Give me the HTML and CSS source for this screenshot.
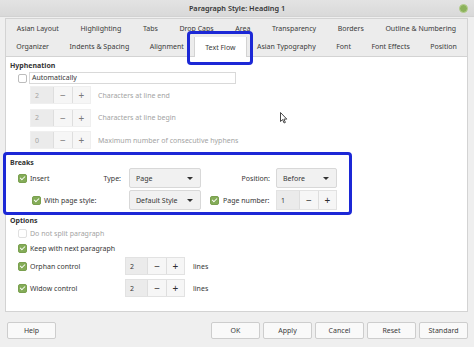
FILE: index.html
```html
<!DOCTYPE html>
<html lang="en">

<head>
    <meta charset="UTF-8">
    <title>Paragraph Style: Heading 1</title>
    <link rel="stylesheet" href="styles.css">
</head>

<body>
    <div class="titlebar">
        <span></span>
        <span class="title">Paragraph Style: Heading 1</span>
        <i class="close"></i>
    </div>

    <div class="dialog">
        <div class="notebook">
            <div class="tabrow">
                <div class="tab">Asian Layout</div>
                <div class="tab">Highlighting</div>
                <div class="tab">Tabs</div>
                <div class="tab">Drop Caps</div>
                <div class="tab">Area</div>
                <div class="tab">Transparency</div>
                <div class="tab">Borders</div>
                <div class="tab">Outline &amp; Numbering</div>
            </div>
            <div class="tabrow second">
                <div class="tab">Organizer</div>
                <div class="tab">Indents &amp; Spacing</div>
                <div class="tab">Alignment</div>
                <div class="tab active">Text Flow</div>
                <div class="tab">Asian Typography</div>
                <div class="tab">Font</div>
                <div class="tab">Font Effects</div>
                <div class="tab">Position</div>
            </div>

            <div class="page">
                <!-- Hyphenation -->
                <div class="heading">Hyphenation</div>
                <div class="check-row">
                    <span class="cb"></span>
                    <span class="focus">Automatically</span>
                </div>
                <div class="spin-row first">
                    <div class="spin off"><span class="field">2</span><span class="btn">&minus;</span><span class="btn">+</span></div>
                    <span class="muted">Characters at line end</span>
                </div>
                <div class="spin-row">
                    <div class="spin off"><span class="field">2</span><span class="btn">&minus;</span><span class="btn">+</span></div>
                    <span class="muted">Characters at line begin</span>
                </div>
                <div class="spin-row">
                    <div class="spin off"><span class="field">0</span><span class="btn">&minus;</span><span class="btn">+</span></div>
                    <span class="muted">Maximum number of consecutive hyphens</span>
                </div>

                <!-- Breaks -->
                <div class="heading breaks-h">Breaks</div>
                <div class="breaks">
                    <div class="cell">
                        <span class="cb on"></span><span>Insert</span>
                        <span class="right">Type:</span>
                    </div>
                    <div class="combo">Page</div>
                    <div class="cell lbl">Position:</div>
                    <div class="combo">Before</div>

                    <div class="cell indent">
                        <span class="cb on"></span><span>With page style:</span>
                    </div>
                    <div class="combo">Default Style</div>
                    <div class="cell pn">
                        <span class="cb on"></span><span>Page number:</span>
                    </div>
                    <div class="spin wide"><span class="field">1</span><span class="btn">&minus;</span><span class="btn">+</span></div>
                </div>

                <!-- Options -->
                <div class="heading options-h">Options</div>
                <div class="check-row split">
                    <span class="cb off"></span><span class="muted">Do not split paragraph</span>
                </div>
                <div class="check-row keep">
                    <span class="cb on"></span><span>Keep with next paragraph</span>
                </div>
                <div class="opt-row orphan">
                    <div class="cell"><span class="cb on"></span><span>Orphan control</span></div>
                    <div class="spin"><span class="field">2</span><span class="btn">&minus;</span><span class="btn">+</span></div>
                    <span>lines</span>
                </div>
                <div class="opt-row">
                    <div class="cell"><span class="cb on"></span><span>Widow control</span></div>
                    <div class="spin"><span class="field">2</span><span class="btn">&minus;</span><span class="btn">+</span></div>
                    <span>lines</span>
                </div>
            </div>
        </div>

        <div class="buttons">
            <button>Help</button>
            <span class="spacer"></span>
            <button>OK</button>
            <button>Apply</button>
            <button>Cancel</button>
            <button>Reset</button>
            <button>Standard</button>
        </div>
    </div>

    <!-- annotation boxes and mouse pointer drawn over the dialog -->
    <div class="mark mark-tab"></div>
    <div class="mark mark-breaks"></div>
    <svg class="pointer" width="8" height="12" viewBox="0 0 8 12">
        <path d="M0.5 0.5 L0.5 9.5 L2.6 7.6 L4.1 11 L5.4 10.4 L3.9 7.1 L6.8 7.1 Z" fill="#fff" stroke="#333" stroke-width="0.9" stroke-linejoin="round" />
    </svg>
</body>

</html>
```

FILE: styles.css
```css
* {
    margin: 0;
    padding: 0;
    box-sizing: border-box;
}

body {
    width: 474px;
    height: 347px;
    overflow: hidden;
    position: relative;
    background: #efefef;
    font-family: "Noto Sans", "Liberation Sans", sans-serif;
    font-size: 7px;
    color: #363636;
}

/* title bar */
.titlebar {
    height: 17px;
    display: grid;
    grid-template-columns: 1fr auto 1fr;
    align-items: center;
    background: linear-gradient(#e3e3e3, #d9d9d9);
    border-bottom: 1px solid #d2d2d2;
}

.title {
    font-size: 7.3px;
    font-weight: 600;
    color: #363636;
}

.close {
    justify-self: end;
    margin-right: 6px;
    width: 9px;
    height: 9px;
    border-radius: 50%;
    background: #8cb25c;
    border: 1px solid #b5cf8e;
}

.dialog {
    padding: 1px 6px 0 5px;
}

/* tabs */
.notebook {
    border: 1px solid #d3d3d3;
    background: #ececec;
}

.tabrow {
    display: flex;
    height: 17px;
    padding-top: 1px;
}

.tabrow.second {
    height: 20px;
}

.tab {
    flex: 1 1 auto;
    display: flex;
    align-items: center;
    justify-content: center;
    padding: 0 4px;
    white-space: nowrap;
    color: #3a3a3a;
}

.tab.active {
    background: #fff;
    border-left: 1px solid #d3d3d3;
    border-right: 1px solid #d3d3d3;
    position: relative;
    z-index: 1;
    margin-bottom: -1px;
}

.page {
    height: 255px;
    background: #fff;
    border-top: 1px solid #d3d3d3;
    padding: 3px 0 0 4px;
}

.heading {
    height: 12px;
    line-height: 12px;
    font-weight: 700;
    color: #333;
}

.muted {
    color: #a3a3a3;
}

/* checkboxes */
.cb {
    flex: none;
    width: 9px;
    height: 9px;
    border: 1px solid #bcbcbc;
    border-radius: 2px;
    background: #fff;
    position: relative;
}

.cb.off {
    border-color: #e0e0e0;
}

.cb.on {
    background: #84ac58;
    border-color: #7aa04f;
}

.cb.on::after {
    content: "";
    position: absolute;
    left: 2.4px;
    top: 0.6px;
    width: 2px;
    height: 4.3px;
    border-right: 1.3px solid #fff;
    border-bottom: 1.3px solid #fff;
    transform: rotate(45deg);
}

.check-row {
    display: flex;
    align-items: center;
    gap: 3px;
    height: 12px;
    margin-left: 8px;
}

.focus {
    width: 207px;
    height: 12px;
    line-height: 10px;
    padding-left: 2px;
    border: 1px solid #d9d9d9;
    margin-left: -1px;
}

/* spin buttons */
.spin {
    display: flex;
    height: 18px;
    width: 60px;
    border: 1px solid #e2e2e2;
}

.spin .field {
    width: 22px;
    background: #ebebeb;
    padding-left: 4px;
    display: flex;
    align-items: center;
}

.spin .btn {
    width: 19px;
    display: flex;
    align-items: center;
    justify-content: center;
    background: #f6f6f6;
    border-left: 1px solid #dedede;
    font-size: 10px;
    color: #2e2e2e;
}

.spin.off .field {
    color: #a3a3a3;
}

.spin.off .btn {
    color: #7a7a7a;
}

.spin-row {
    display: flex;
    align-items: center;
    gap: 7px;
    margin: 4.5px 0 0 20px;
    height: 18px;
}

.spin-row.first {
    margin-top: 2px;
}

.spin-row .spin {
    width: 61px;
    border-color: #efefef;
}

.spin-row .field {
    width: 23px;
}

/* breaks */
.breaks-h {
    margin-top: 8px;
    height: 11px;
    line-height: 11px;
}

.breaks {
    display: grid;
    grid-template-columns: 111px 72px 75px 61px;
    grid-auto-rows: 20px;
    row-gap: 2px;
    margin-left: 8px;
}

.cell {
    display: flex;
    align-items: center;
    gap: 3px;
}

.cell .right {
    margin-left: auto;
    padding-right: 8px;
}

.cell.indent {
    padding-left: 14px;
}

.cell.lbl {
    justify-content: flex-end;
    padding-right: 6px;
}

.cell.pn {
    padding-left: 9px;
    gap: 4px;
}

.combo {
    position: relative;
    display: flex;
    align-items: center;
    padding-left: 6px;
    background: #f1f1f1;
    border: 1px solid #d8d8d8;
    border-radius: 2px;
}

.combo::after {
    content: "";
    position: absolute;
    right: 7px;
    top: 8px;
    border-left: 3px solid transparent;
    border-right: 3px solid transparent;
    border-top: 3.5px solid #333;
}

.spin.wide {
    width: 61px;
    height: 20px;
}

.spin.wide .field {
    width: 23px;
}

/* options */
.options-h {
    margin-top: 6px;
    height: 10px;
    line-height: 10px;
}

.check-row.split {
    margin-top: 1px;
}

.check-row.keep {
    margin-top: 3px;
}

.opt-row {
    display: grid;
    grid-template-columns: 107px 60px auto;
    align-items: center;
    height: 18px;
    margin: 4px 0 0 8px;
}

.opt-row.orphan {
    margin-top: 3px;
}

.opt-row > span:last-child {
    padding-left: 8px;
}

/* bottom buttons */
.buttons {
    display: flex;
    gap: 3px;
    margin-top: 10px;
    padding-left: 2px;
}

.spacer {
    flex: 1;
}

.buttons button {
    width: 49px;
    height: 17px;
    font: inherit;
    color: #3c3c3c;
    background: #f9f9f9;
    border: 1px solid #cdcdcd;
    border-radius: 2px;
}

/* overlays */
.mark {
    position: absolute;
    border: 3px solid #1c28d6;
    border-radius: 4px;
}

.mark-tab {
    left: 187px;
    top: 31px;
    width: 66px;
    height: 34px;
}

.mark-breaks {
    left: 3px;
    top: 152px;
    width: 349px;
    height: 63px;
}

.pointer {
    position: absolute;
    left: 280px;
    top: 112px;
}
```
